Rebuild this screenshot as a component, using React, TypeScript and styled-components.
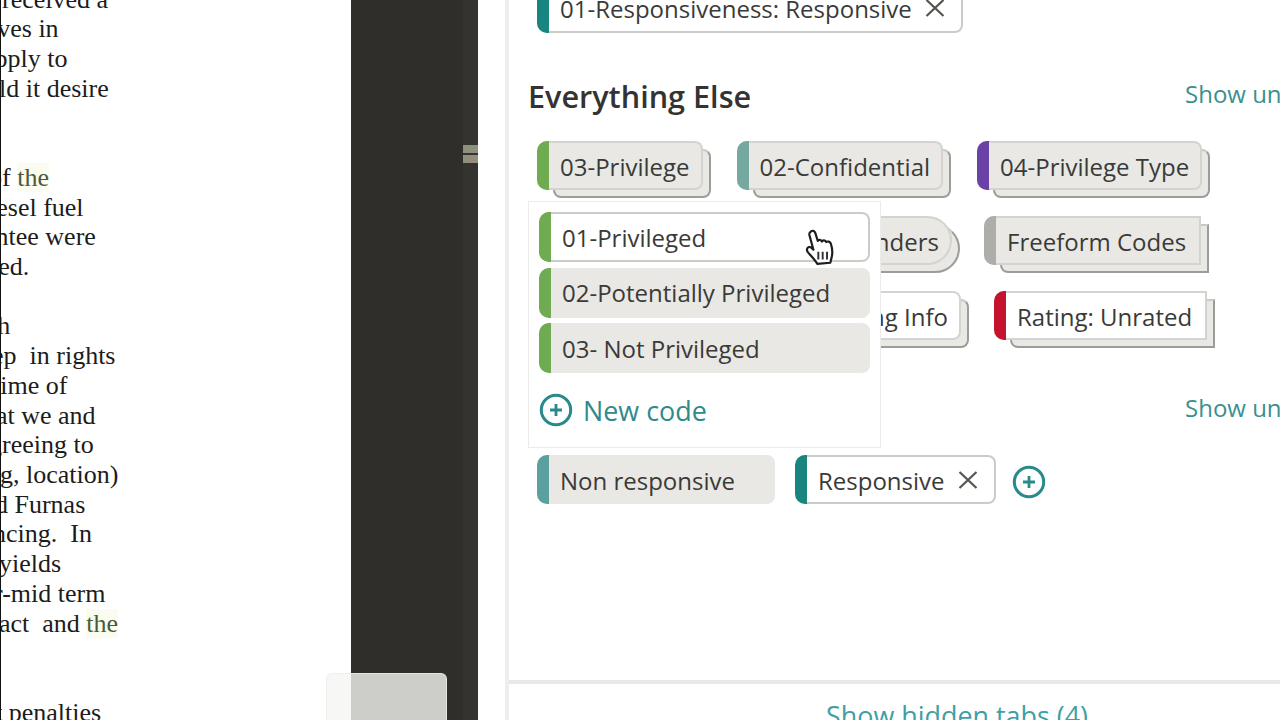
import React from "react";
import styled, { createGlobalStyle } from "styled-components";

const Global = createGlobalStyle`
  html, body { margin: 0; padding: 0; background: #fff; }
  #root { width: 1280px; height: 720px; }
`;

const Stage = styled.div`
  position: relative;
  width: 1280px;
  height: 720px;
  overflow: hidden;
  display: flex;
  background: #fff;
`;

const DocPane = styled.div`
  flex: none;
  width: 350px;
  height: 720px;
  border-left: 1px solid #111;
  overflow: hidden;
  font-family: "Liberation Serif", "Times New Roman", serif;
  font-size: 26px;
  line-height: 29.72px;
  color: #1c1c1c;
`;

const DocBody = styled.div`
  margin-top: -15.5px;
`;

const DocLine = styled.div<{ $shift: number }>`
  height: 29.72px;
  white-space: pre;
  margin-left: ${(p) => p.$shift}px;
`;

const Hit = styled.span`
  background: #fafcf0;
  color: #4b5a3c;
`;

const Gutter = styled.div`
  flex: none;
  width: 127px;
  height: 720px;
  background: #2f2e2a;
  display: flex;
  justify-content: flex-end;
`;

const ScrollTrack = styled.div`
  width: 15px;
  background: #34332f;
  padding-top: 145px;
  display: flex;
  flex-direction: column;
  gap: 2px;
`;

const Mark = styled.div<{ $tint?: boolean }>`
  height: 8px;
  background: ${(p) =>
    p.$tint ? "linear-gradient(to right, #8d917b 50%, #a3857a 65%, #8d917b 90%)" : "#8d917b"};
`;

const FloatBox = styled.div`
  position: absolute;
  left: 326px;
  top: 673px;
  width: 121px;
  height: 60px;
  box-sizing: border-box;
  border-radius: 6px;
  background: rgba(245, 245, 243, 0.8);
  border: 1px solid rgba(238, 238, 236, 0.8);
`;

const Main = styled.div`
  flex: none;
  width: 923px;
  padding-left: 27px;
  box-sizing: border-box;
`;

const Panel = styled.div`
  position: relative;
  width: 900px;
  height: 720px;
  box-sizing: border-box;
  border-left: 4px solid #eeeeec;
  display: flex;
  flex-direction: column;
  font-family: "Open Sans", "Liberation Sans", sans-serif;
  color: #3a3a38;
`;

const Content = styled.div`
  flex: 1;
  padding-left: 28px;
  display: flex;
  flex-direction: column;
`;

const TopRow = styled.div`
  display: flex;
  margin-top: -16px;
`;

const SectionHead = styled.div<{ $top: number }>`
  display: grid;
  grid-template-columns: 657px auto;
  align-items: center;
  height: 40px;
  margin: ${(p) => p.$top}px 0 0 -9px;
`;

const Heading = styled.h2`
  margin: 0;
  font-size: 30.6px;
  font-weight: 600;
  color: #333331;
  white-space: nowrap;
`;

const ShowLink = styled.a`
  font-size: 24px;
  color: #3b908f;
  white-space: nowrap;
  margin-top: -6px;
`;

const Rows = styled.div<{ $top: number }>`
  display: flex;
  flex-direction: column;
  gap: 26px;
  margin-top: ${(p) => p.$top}px;
`;

const Row = styled.div<{ $gap?: number }>`
  display: flex;
  align-items: center;
  gap: ${(p) => p.$gap ?? 34}px;
`;

type Shape = "round" | "pill" | "square";

const radius = (s?: Shape) => (s === "pill" ? "25px 25px" : s === "square" ? "0 0" : "8px 8px");

const Stack = styled.div<{ $shape?: Shape }>`
  position: relative;
  z-index: 0;
  flex: none;

  &::after {
    content: "";
    position: absolute;
    z-index: -1;
    left: 16px;
    right: -8px;
    top: 8px;
    bottom: -8px;
    background: #e9e8e5;
    border: 2px solid #9d9d98;
    border-top-color: #c9c9c5;
    border-radius: 0 ${(p) => radius(p.$shape)} 8px;
  }
`;

const Chip = styled.div<{
  $bar: string;
  $white?: boolean;
  $shape?: Shape;
  $width?: number;
  $end?: boolean;
  $edge?: string;
}>`
  position: relative;
  flex: none;
  box-sizing: border-box;
  height: 49px;
  width: ${(p) => (p.$width ? `${p.$width}px` : "auto")};
  display: flex;
  align-items: center;
  justify-content: ${(p) => (p.$end ? "flex-end" : "flex-start")};
  gap: 13px;
  padding: 2px ${(p) => (p.$shape === "square" ? 12.5 : 11)}px 0 23px;
  font-size: 24px;
  color: #3a3a38;
  white-space: nowrap;
  background: ${(p) => (p.$white ? "#fff" : "#e9e8e5")};
  border: 2px solid ${(p) => p.$edge ?? "transparent"};
  border-left: 0;
  border-radius: 10px ${(p) => radius(p.$shape)} 10px;

  &::before {
    content: "";
    position: absolute;
    left: 0;
    top: -2px;
    bottom: -2px;
    width: 12px;
    background: ${(p) => p.$bar};
    border-radius: 10px 0 0 10px;
  }
`;

const TopChip = styled(Chip)`
  padding-top: 0;
`;

const Svg = styled.svg`
  flex: none;
  display: block;
`;

const CloseGlyph = styled(Svg)`
  margin: -1px 5.5px 0 0;
`;

const AddWrap = styled.div`
  margin: 4px 0 0 -4px;
  display: flex;
`;

const Popup = styled.div`
  position: absolute;
  left: 19px;
  top: 201px;
  width: 353px;
  height: 247px;
  box-sizing: border-box;
  padding: 10px 10px 0;
  background: #fff;
  border: 1px solid #ebebe9;
  z-index: 3;
  display: flex;
  flex-direction: column;
  gap: 5.5px;
`;

const PopupChip = styled(Chip)`
  width: 331px;
  height: 50px;
  padding-top: 0;
`;

const NewCode = styled.div`
  display: flex;
  align-items: center;
  gap: 10px;
  margin-top: 13px;
  font-size: 26.9px;
  color: #2f8a8b;
`;

const Cursor = styled.svg`
  position: absolute;
  left: 804px;
  top: 229px;
  z-index: 5;
`;

const Footer = styled.div`
  flex: none;
  height: 40px;
  border-top: 4px solid #e8e8e6;
  box-sizing: border-box;
  text-align: center;
  padding-top: 14px;
  font-size: 26.9px;
  line-height: 36px;
  color: #3ea0a6;
  white-space: nowrap;
`;

const XIcon = () => (
  <CloseGlyph width="20" height="18" viewBox="0 0 20 18" fill="none" stroke="#55554f" strokeWidth="2.2">
    <path d="M1.5 1 L18.5 17 M18.5 1 L1.5 17" />
  </CloseGlyph>
);

const PlusCircle = () => (
  <Svg width="34" height="34" viewBox="0 0 34 34" fill="none" stroke="#2a8a8a">
    <circle cx="17" cy="17" r="14.7" strokeWidth="3" />
    <path d="M17 11 V23 M11 17 H23" strokeWidth="2.8" />
  </Svg>
);

const docLines: [number, React.ReactNode][] = [
  [1, "received a"],
  [-11, "lves in"],
  [-18, "apply to"],
  [-15, "uld it desire"],
  [0, ""],
  [0, ""],
  [-12, <>of <Hit>the</Hit></>],
  [-12, "iesel fuel"],
  [-17, "antee were"],
  [-10, "ted."],
  [0, ""],
  [-11, "th"],
  [-9, "ep  in rights"],
  [-8, "time of"],
  [-18, "hat we and"],
  [-12, "greeing to"],
  [-14, "ng, location)"],
  [-19, "nd Furnas"],
  [-8, "ncing.  In"],
  [-2, "yields"],
  [-7, "r-mid term"],
  [-2, <>act  and <Hit>the</Hit></>],
  [0, ""],
  [0, ""],
  [-6, "t penalties"],
];

export default function App() {
  return (
    <>
      <Global />
      <Stage>
        <DocPane>
          <DocBody>
            {docLines.map(([shift, text], i) => (
              <DocLine key={i} $shift={shift}>
                {text}
              </DocLine>
            ))}
          </DocBody>
        </DocPane>
        <Gutter>
          <ScrollTrack>
            <Mark />
            <Mark $tint />
          </ScrollTrack>
        </Gutter>
        <FloatBox />
        <Main>
          <Panel>
            <Content>
              <TopRow>
                <TopChip $bar="#1a8580" $white $edge="#cbcbc8">
                  01-Responsiveness: Responsive
                  <XIcon />
                </TopChip>
              </TopRow>
              <SectionHead $top={42}>
                <Heading>Everything Else</Heading>
                <ShowLink>Show unused</ShowLink>
              </SectionHead>
              <Rows $top={26}>
                <Row>
                  <Stack><Chip $bar="#6fab50" $edge="#d4d3cf">03-Privilege</Chip></Stack>
                  <Stack><Chip $bar="#74a8a0" $edge="#d4d3cf">02-Confidential</Chip></Stack>
                  <Stack><Chip $bar="#6a41a5" $edge="#d4d3cf">04-Privilege Type</Chip></Stack>
                </Row>
                <Row $gap={32}>
                  <Stack $shape="pill">
                    <Chip $bar="#6fab50" $edge="#d4d3cf" $shape="pill" $width={415} $end>Reminders</Chip>
                  </Stack>
                  <Stack $shape="square">
                    <Chip $bar="#adadaa" $edge="#d4d3cf" $shape="square">Freeform Codes</Chip>
                  </Stack>
                </Row>
                <Row $gap={33}>
                  <Stack>
                    <Chip $bar="#6fab50" $edge="#d4d3cf" $white $width={424} $end>Pending Info</Chip>
                  </Stack>
                  <Stack $shape="square">
                    <Chip $bar="#c4122f" $edge="#d4d3cf" $white $shape="square">Rating: Unrated</Chip>
                  </Stack>
                </Row>
              </Rows>
              <SectionHead $top={50}>
                <Heading />
                <ShowLink>Show unused</ShowLink>
              </SectionHead>
              <Rows $top={25}>
                <Row $gap={20}>
                  <Chip $bar="#5b9f9e" $width={238}>Non responsive</Chip>
                  <Chip $bar="#1a8580" $white $edge="#cbcbc8">
                    Responsive
                    <XIcon />
                  </Chip>
                  <AddWrap>
                    <PlusCircle />
                  </AddWrap>
                </Row>
              </Rows>
            </Content>
            <Footer>Show hidden tabs (4)</Footer>
            <Popup>
              <PopupChip $bar="#6fab50" $white $edge="#cbcbc8">01-Privileged</PopupChip>
              <PopupChip $bar="#6fab50">02-Potentially Privileged</PopupChip>
              <PopupChip $bar="#6fab50">03- Not Privileged</PopupChip>
              <NewCode>
                <PlusCircle />
                New code
              </NewCode>
            </Popup>
          </Panel>
        </Main>
        <Cursor width="33" height="37" viewBox="0 0 30 34">
          <path
            d="M6 2.5 C7.5 1 9.5 1.5 10.2 3.5 L12.5 11 C13 9.5 15.5 9.5 16.3 11.5 C17 10 19.5 10 20.3 12 C21.2 11 23.8 11.5 24.5 13.5 C26 18 26.5 22 25 27 L24 31 L12 32 C10.5 29 7 25.5 3.5 21.5 C2 19.5 2.2 17 4.5 16.5 C5.5 16.3 7 17.5 8.5 19 L4.8 5.5 C4.5 4.2 5 3.2 6 2.5 Z"
            fill="#fff"
            stroke="#1d1d1d"
            strokeWidth="2"
            strokeLinejoin="round"
          />
          <path d="M13 21 V28 M17 21 V28 M21 21 V28" stroke="#333" strokeWidth="1.8" />
        </Cursor>
      </Stage>
    </>
  );
}
